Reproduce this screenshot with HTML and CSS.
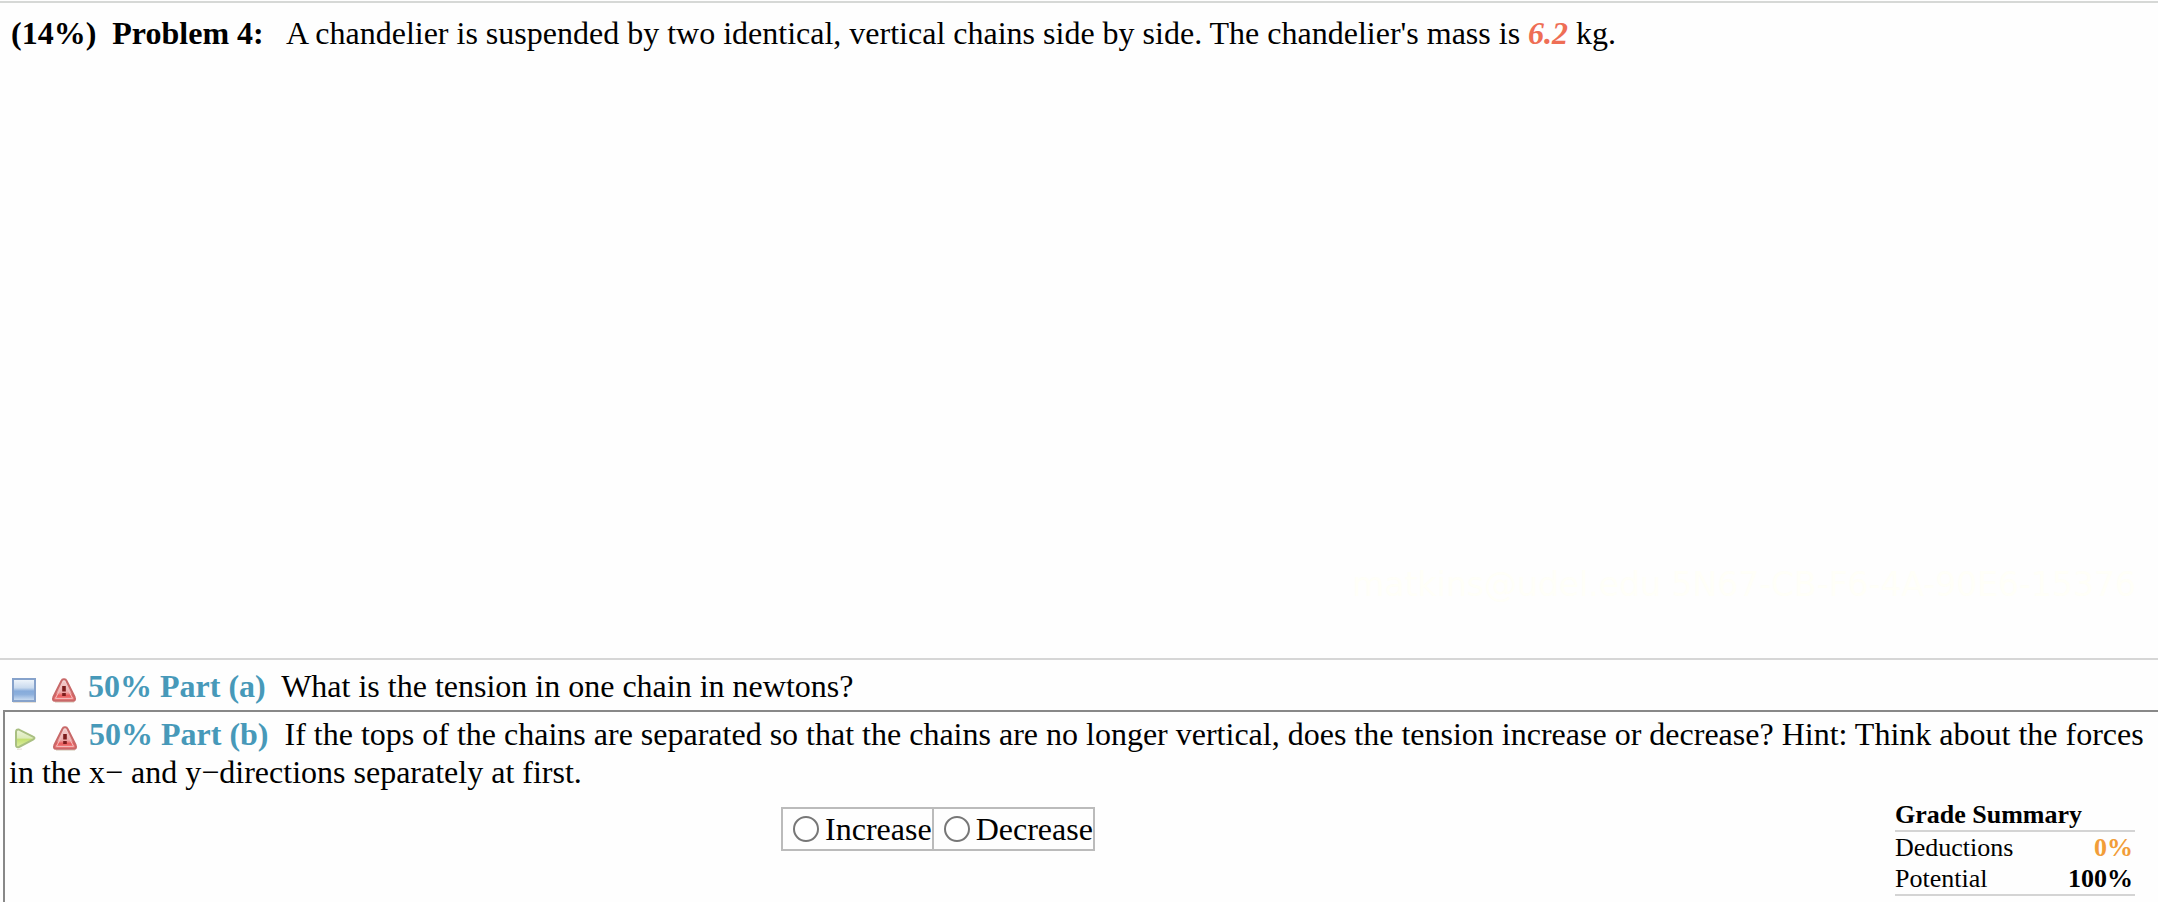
FILE: index.html
```html
<!DOCTYPE html>
<html lang="en">
<head>
    <meta charset="UTF-8">
    <meta name="viewport" content="width=device-width, initial-scale=1.0">
    <title>Problem 4</title>
    <link rel="stylesheet" href="styles.css">
</head>
<body>
    <!-- gradients and symbols shared by the part icons -->
    <svg class="defs" aria-hidden="true">
        <defs>
            <linearGradient id="blueFill" x1="0" y1="0" x2="0" y2="1">
                <stop offset="0" stop-color="#f2f7fc"/>
                <stop offset="0.4" stop-color="#c9daee"/>
                <stop offset="0.55" stop-color="#86abdb"/>
                <stop offset="0.7" stop-color="#8db0dc"/>
                <stop offset="1" stop-color="#d3e2f3"/>
            </linearGradient>
            <linearGradient id="redFill" x1="0" y1="0" x2="0" y2="1">
                <stop offset="0" stop-color="#f3dcdc"/>
                <stop offset="0.6" stop-color="#eda9a9"/>
                <stop offset="0.75" stop-color="#e85d5d"/>
                <stop offset="1" stop-color="#f08080"/>
            </linearGradient>
            <linearGradient id="greenFill" x1="0" y1="0" x2="0" y2="1">
                <stop offset="0" stop-color="#eef5dc"/>
                <stop offset="0.48" stop-color="#dcebb8"/>
                <stop offset="0.55" stop-color="#c3e070"/>
                <stop offset="1" stop-color="#e0f0a8"/>
            </linearGradient>
        </defs>
        <symbol id="warning" viewBox="0 0 26 26">
            <path d="M4 25h19" stroke="#e6e0d6" stroke-width="2"/>
            <path d="M13 2.2 Q14.8 2 15.6 4 L23.6 20 Q25 23.6 22 23.8 H4 Q1 23.6 2.4 20 L10.4 4 Q11.2 2 13 2.2Z" fill="url(#redFill)" stroke="#c86868" stroke-width="2"/>
            <path d="M13 5.2 L21.6 21.4 H4.4Z" fill="none" stroke="#f3c0c0"/>
            <path d="M11.2 9h3.6v5.6h-3.6zM11.2 16h3.6v3h-3.6z" fill="#7c1c1c"/>
        </symbol>
    </svg>

    <section class="problem">
        <p class="statement"><b class="problem-label">(14%) &nbsp;Problem 4:</b> A chandelier is suspended by two identical, vertical chains side by side. The chandelier's mass is <span class="value">6.2</span> kg.</p>
        <p class="watermark">matkins@udel.edu 5N67-CB-F6-4A-90E6-15376</p>
    </section>

    <section class="part">
        <svg class="icon" viewBox="0 0 26 26" aria-hidden="true">
            <path d="M2 25.5h23" stroke="#e6e0d6"/>
            <rect x="2" y="2" width="22" height="22" fill="url(#blueFill)" stroke="#86a2cb" stroke-width="2"/>
        </svg>
        <svg class="icon warning" aria-hidden="true"><use href="#warning"/></svg>
        <b class="part-label">50% Part (a)</b>
        What is the tension in one chain in newtons?
    </section>

    <section class="part active">
        <svg class="icon" viewBox="0 0 26 26" aria-hidden="true">
            <path d="M5 24.5 L10 24" stroke="#e6e0d6"/>
            <path d="M4 7 Q4 4 7 4.6 L21 11.6 Q24 13 21 14.6 L7 22 Q4 23 4 20Z" fill="url(#greenFill)" stroke="#a9bf82" stroke-width="2"/>
        </svg>
        <svg class="icon warning" aria-hidden="true"><use href="#warning"/></svg>
        <b class="part-label">50% Part (b)</b>
        If the tops of the chains are separated so that the chains are no longer vertical, does the tension increase or decrease? Hint: Think about the forces in the x− and y−directions separately at first.

        <div class="work">
            <form class="choices">
                <label class="choice"><input type="radio" name="answer" value="increase">Increase</label>
                <label class="choice"><input type="radio" name="answer" value="decrease">Decrease</label>
            </form>
            <table class="grade">
                <caption>Grade Summary</caption>
                <tbody>
                    <tr>
                        <th scope="row">Deductions</th>
                        <td class="deduction">0%</td>
                    </tr>
                    <tr>
                        <th scope="row">Potential</th>
                        <td>100%</td>
                    </tr>
                </tbody>
            </table>
        </div>
    </section>
</body>
</html>
```
FILE: styles.css
```css
body {
  display: flex;
  flex-direction: column;
  box-sizing: border-box;
  min-height: 100vh;
  margin: 0;
  padding-top: 1px;
  background-color: #fefefe;
  color: #000;
  font-family: "Liberation Serif", "Times New Roman", serif;
  font-size: 32px;
  line-height: 38px;
}

p {
  margin: 0;
}

.defs {
  position: absolute;
  width: 0;
  height: 0;
}

.problem {
  padding-bottom: 54px;
  border-top: 2px solid #d6d8d6;
  border-bottom: 2px solid #d6d6d6;
}

.statement {
  padding: 11px 11px 0;
}

.problem-label {
  margin-right: 16px;
}

.value {
  color: #ee6e55;
  font-weight: bold;
  font-style: italic;
}

.watermark {
  margin-top: 514px;
  padding-right: 22px;
  color: #fffff8;
  font-family: "DejaVu Sans", Verdana, sans-serif;
  font-size: 33px;
  text-align: right;
}

.part {
  padding: 7px 8px 5px 11px;
}

.active {
  flex: 1;
  margin-left: 3px;
  padding: 3px 8px 0 4px;
  border-top: 2px solid #888;
  border-left: 2px solid #888;
}

.icon {
  width: 26px;
  height: 26px;
  margin-right: 6px;
  vertical-align: -6px;
}

.active .icon:first-child {
  margin-left: 3px;
}

.icon.warning {
  margin-right: 3px;
}

.part-label {
  margin-right: 8px;
  color: #4799b9;
}

.work {
  display: grid;
  grid-template-columns: 1fr 240px;
  column-gap: 28px;
  padding: 8px 15px 0 0;
}

.choices {
  display: flex;
  justify-self: center;
  align-self: start;
  margin-top: 8px;
  border: 2px solid #bbb;
}

.choice {
  display: flex;
  align-items: center;
  height: 40px;
  padding-left: 10px;
}

.choice + .choice {
  border-left: 2px solid #bbb;
}

.choice input {
  appearance: none;
  width: 26px;
  height: 26px;
  margin: 0 6px 0 0;
  border: 2px solid #777;
  border-radius: 50%;
  background-color: #fff;
}

.choice input:checked {
  background-color: #4799b9;
}

.grade {
  width: 100%;
  border-collapse: collapse;
  border-top: 2px solid #d4d4d4;
  border-bottom: 2px solid #d4d4d4;
  font-size: 26px;
  line-height: 31px;
}

.grade caption {
  font-weight: bold;
  text-align: left;
}

.grade th {
  padding: 0;
  font-weight: normal;
  text-align: left;
}

.grade td {
  padding: 0 2px 0 0;
  font-weight: bold;
  text-align: right;
}

.grade .deduction {
  color: #f29d38;
}
```
